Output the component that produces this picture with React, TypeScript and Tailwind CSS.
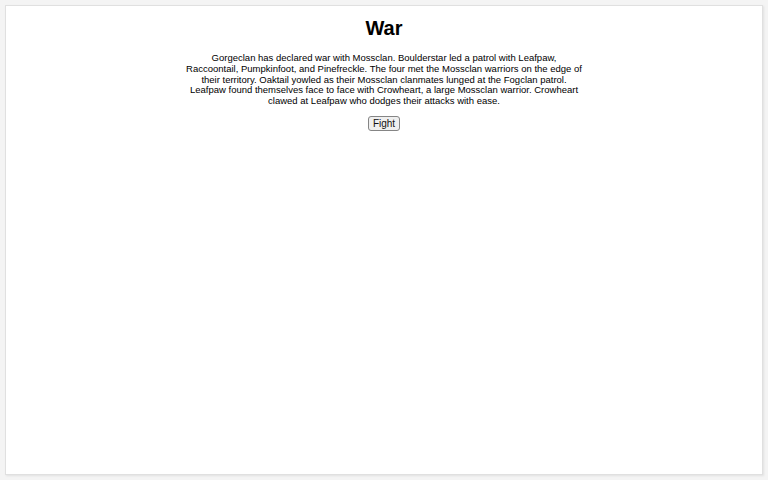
const lines = [
  "Gorgeclan has declared war with Mossclan. Boulderstar led a patrol with Leafpaw,",
  "Raccoontail, Pumpkinfoot, and Pinefreckle. The four met the Mossclan warriors on the edge of",
  "their territory. Oaktail yowled as their Mossclan clanmates lunged at the Fogclan patrol.",
  "Leafpaw found themselves face to face with Crowheart, a large Mossclan warrior. Crowheart",
  "clawed at Leafpaw who dodges their attacks with ease.",
];

export default function App() {
  return (
    <div
      className="min-h-[480px] bg-[#f4f4f4] p-[5px]"
      style={{ fontFamily: '"Liberation Sans", Arial, sans-serif' }}
    >
      <div className="h-[470px] bg-white border border-[#e0e0e0] shadow-[1px_1px_2px_rgba(0,0,0,0.08)] flex flex-col items-center">
        <h1 className="mt-[10px] text-[20px] font-bold text-black leading-[24px]">War</h1>
        <p className="mt-[13px] w-[400px] text-center text-[9.5px] leading-[10.75px] text-black">
          {lines.map((l) => (
            <span key={l} className="block whitespace-nowrap">
              {l}
            </span>
          ))}
        </p>
        <button className="mt-[9px] px-[4px] h-[15px] leading-[13px] text-[10px] text-[#111] bg-[#efefef] border border-[#858585] rounded-[3px]">
          Fight
        </button>
      </div>
    </div>
  );
}
